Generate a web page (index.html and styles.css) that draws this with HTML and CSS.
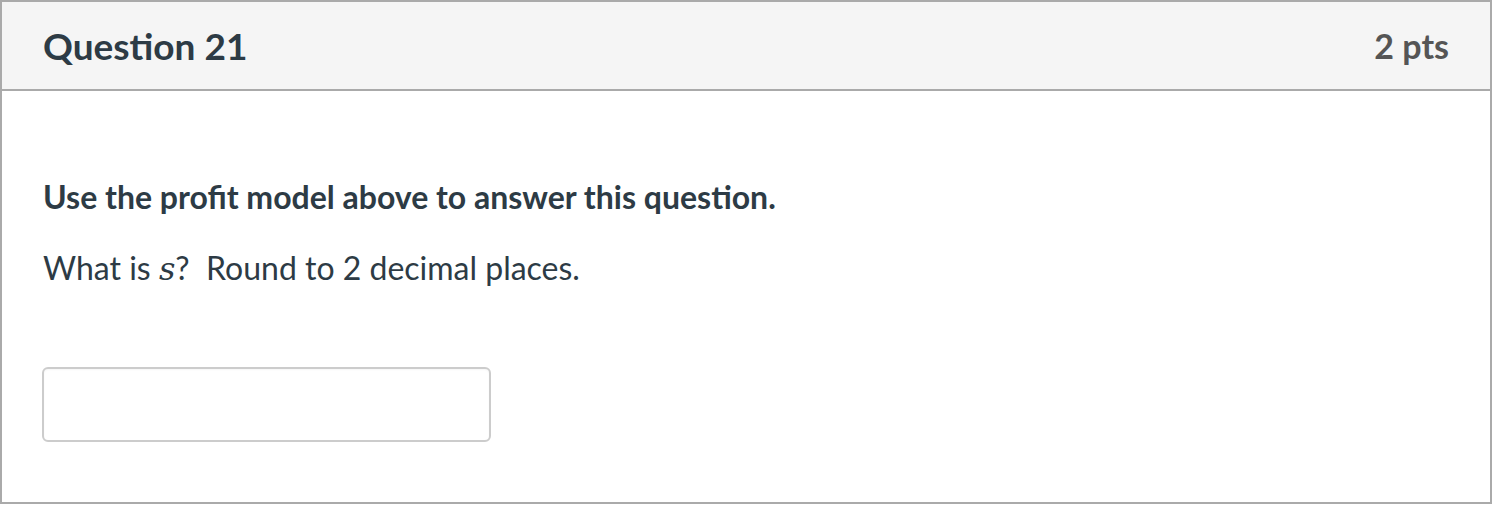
FILE: index.html
```html
<!DOCTYPE html>
<html>
<head>
<meta charset="utf-8">
<link rel="stylesheet" href="styles.css">
</head>
<body>
<div class="question">
  <div class="q-header">
    <h2 class="q-title">Question 21</h2>
    <span class="q-points">2 pts</span>
  </div>
  <div class="q-body">
    <p class="q-lead">Use the profit model above to answer this question.</p>
    <p class="q-text">What is <span class="math">s</span>?&nbsp; Round to 2 decimal places.</p>
    <input class="q-input" type="text">
  </div>
</div>
</body>
</html>
```

FILE: styles.css
```css
html, body {
  margin: 0;
  padding: 0;
  background: #fff;
}
body {
  font-family: Lato, "Noto Sans", sans-serif;
  color: #2d3b45;
}
.question {
  width: 1492px;
  height: 504px;
  box-sizing: border-box;
  border: 2px solid #aaaaaa;
  display: flex;
  flex-direction: column;
}
.q-header {
  height: 89px;
  box-sizing: border-box;
  background: #f5f5f5;
  border-bottom: 2px solid #aaaaaa;
  display: flex;
  align-items: center;
  justify-content: space-between;
  padding: 0 41px 0 41px;
}
.q-title {
  margin: 0;
  font-size: 37px;
  font-weight: 700;
  color: #2d3b45;
}
.q-points {
  font-size: 34px;
  font-weight: 700;
  color: #555555;
}
.q-body {
  padding: 86px 41px 0 41px;
}
.q-lead {
  margin: 0;
  font-size: 32px;
  font-weight: 700;
  line-height: 40px;
}
.q-text {
  margin: 31px 0 0 0;
  font-size: 32px;
  line-height: 40px;
}
.math {
  font-family: "DejaVu Serif", serif;
  font-style: italic;
  font-size: 32px;
}
.q-input {
  display: block;
  margin-top: 78px;
  margin-left: -1px;
  width: 449px;
  height: 75px;
  box-sizing: border-box;
  border: 2px solid #cccccc;
  border-radius: 6px;
  background: #fff;
  box-shadow: inset 0 1px 2px rgba(0, 0, 0, 0.04);
  padding: 0;
}
```
